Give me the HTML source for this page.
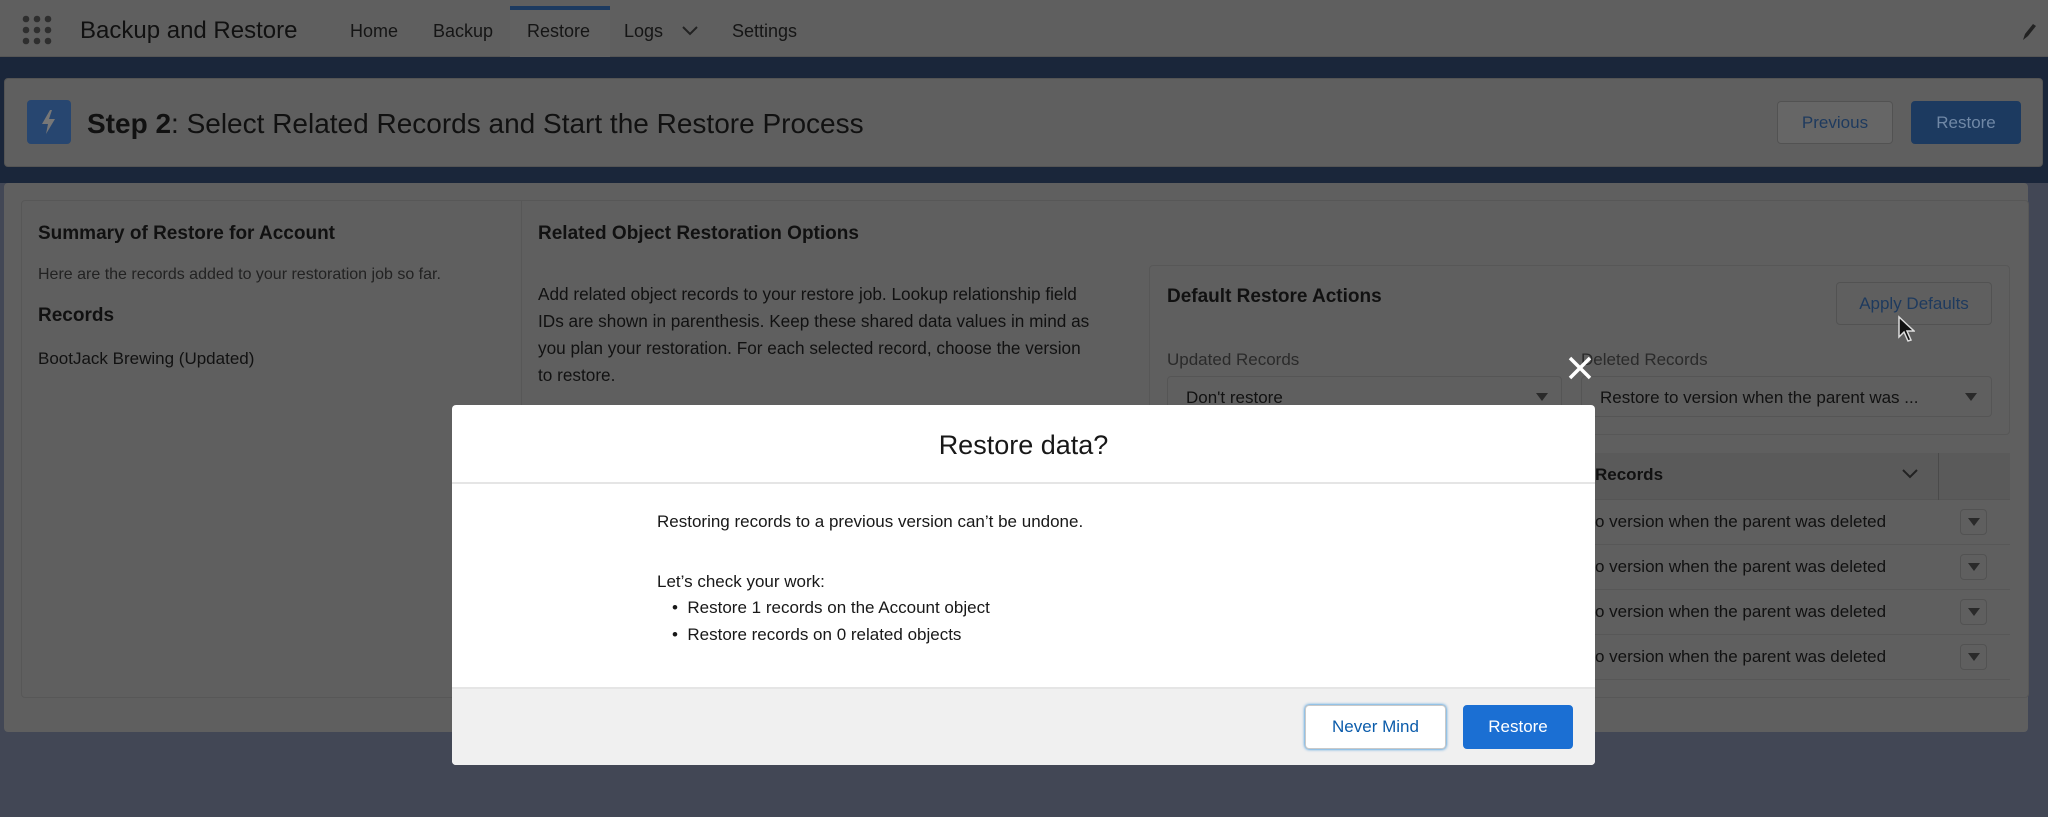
<!DOCTYPE html>
<html><head><meta charset="utf-8"><style>
*{box-sizing:border-box;margin:0;padding:0}
body{width:2048px;height:817px;overflow:hidden;position:relative;background:#424755;font-family:"Liberation Sans",sans-serif;color:#111}
.a{position:absolute}
.hdr{left:0;top:0;width:2048px;height:57px;background:#5f5f5f;border-bottom:1px solid #555}
.nav{top:21px;font-size:18px;color:#151515}
.band{left:0;top:57px;width:2048px;height:126px;background:#1a263a}
.card{background:#5f5f5f;border:1px solid #545454;border-radius:4px}
.btn{border:1px solid #525252;border-radius:4px;background:#666;color:#1e3a5e;font-size:17px;display:flex;align-items:center;justify-content:center}
.bb{background:#1c3a60;color:#7088a6;border-color:#1c3a60}
.lbl{font-size:17px;color:#2a2a2a}
.dd{background:#666;border:1px solid #555;border-radius:4px;font-size:17px;padding:11px 18px;color:#111}
.row{font-size:17px;color:#111}
.tri{width:0;height:0;border-left:6px solid transparent;border-right:6px solid transparent;border-top:8px solid #2a2a2a}
.mb{border:1px solid #c9c9c9;border-radius:4px;background:#fff;color:#0b5cab;font-size:17px;display:flex;align-items:center;justify-content:center}
</style></head><body>
<div class="a hdr"></div>
<svg class="a" style="left:22px;top:15px" width="30" height="30"><g fill="#2e2e2e"><circle cx="4" cy="4" r="3.3"/><circle cx="15" cy="4" r="3.3"/><circle cx="26" cy="4" r="3.3"/><circle cx="4" cy="15" r="3.3"/><circle cx="15" cy="15" r="3.3"/><circle cx="26" cy="15" r="3.3"/><circle cx="4" cy="26" r="3.3"/><circle cx="15" cy="26" r="3.3"/><circle cx="26" cy="26" r="3.3"/></g></svg>
<div class="a" style="left:80px;top:17px;font-size:24px;color:#111">Backup and Restore</div>
<div class="a" style="left:510px;top:6px;width:100px;height:51px;background:#616161;border-top:4px solid #1c3a60"></div>
<div class="a nav" style="left:350px">Home</div>
<div class="a nav" style="left:433px">Backup</div>
<div class="a nav" style="left:527px">Restore</div>
<div class="a nav" style="left:624px">Logs</div>
<svg class="a" style="left:682px;top:26px" width="16" height="10"><path d="M1 1l7 7 7-7" stroke="#222" stroke-width="2" fill="none"/></svg>
<div class="a nav" style="left:732px">Settings</div>
<svg class="a" style="left:2020px;top:22px" width="16" height="20"><path d="M3 18l2-6 8-10 3 2-8 10z" fill="#222"/></svg>
<div class="a band"></div>
<div class="a card" style="left:4px;top:78px;width:2039px;height:89px"></div>
<div class="a" style="left:27px;top:100px;width:44px;height:44px;background:#274670;border-radius:4px"></div>
<svg class="a" style="left:37px;top:108px" width="24" height="28"><path d="M13 2L5 16h6l-2 10 9-15h-6l3-9z" fill="#777"/></svg>
<div class="a" style="left:87px;top:108px;font-size:28px;color:#111"><b>Step 2</b>: Select Related Records and Start the Restore Process</div>
<div class="a btn" style="left:1777px;top:101px;width:116px;height:43px">Previous</div>
<div class="a btn bb" style="left:1911px;top:101px;width:110px;height:43px">Restore</div>
<div class="a" style="left:4px;top:183px;width:2024px;height:549px;background:#5f5f5f;border-radius:4px"></div>
<div class="a" style="left:21px;top:200px;width:2008px;height:498px;border:1px solid #575757;border-radius:4px;background:#5f5f5f"></div>
<div class="a" style="left:521px;top:200px;width:1px;height:498px;background:#575757"></div>
<div class="a" style="left:38px;top:223px;font-size:19px;font-weight:bold">Summary of Restore for Account</div>
<div class="a" style="left:38px;top:266px;font-size:16px;color:#222">Here are the records added to your restoration job so far.</div>
<div class="a" style="left:38px;top:305px;font-size:19px;font-weight:bold">Records</div>
<div class="a" style="left:38px;top:349px;font-size:17px">BootJack Brewing (Updated)</div>
<div class="a" style="left:538px;top:223px;font-size:19px;font-weight:bold">Related Object Restoration Options</div>
<div class="a" style="left:538px;top:281px;width:560px;font-size:17.2px;line-height:27px">Add related object records to your restore job. Lookup relationship field IDs are shown in parenthesis. Keep these shared data values in mind as you plan your restoration. For each selected record, choose the version to restore.</div>
<div class="a" style="left:1149px;top:265px;width:861px;height:170px;border:1px solid #575757;border-radius:4px;background:#5f5f5f"></div>
<div class="a" style="left:1167px;top:286px;font-size:19px;font-weight:bold">Default Restore Actions</div>
<div class="a btn" style="left:1836px;top:282px;width:156px;height:43px;background:#5f5f5f">Apply Defaults</div>
<div class="a lbl" style="left:1167px;top:350px">Updated Records</div>
<div class="a lbl" style="left:1581px;top:350px">Deleted Records</div>
<div class="a dd" style="left:1167px;top:376px;width:395px;height:41px;background:#5f5f5f">Don't restore</div>
<div class="a dd" style="left:1581px;top:376px;width:411px;height:41px;background:#5f5f5f">Restore to version when the parent was ...</div>
<div class="a tri" style="left:1536px;top:393px"></div>
<div class="a tri" style="left:1965px;top:393px"></div>
<div class="a" style="left:1149px;top:453px;width:861px;height:47px;background:#5a5a5a;border-bottom:1px solid #555"></div>
<div class="a" style="left:1595px;top:465px;font-size:17px;font-weight:bold">Records</div>
<svg class="a" style="left:1902px;top:469px" width="16" height="10"><path d="M1 1l7 7 7-7" stroke="#222" stroke-width="2" fill="none"/></svg>
<div class="a" style="left:1938px;top:453px;width:1px;height:47px;background:#4a4a4a"></div>
<div class="a" style="left:1149px;top:500px;width:861px;height:180px;background:#5f5f5f"></div>
<div class="a row" style="left:1595px;top:512px">o version when the parent was deleted</div>
<div class="a row" style="left:1595px;top:557px">o version when the parent was deleted</div>
<div class="a row" style="left:1595px;top:602px">o version when the parent was deleted</div>
<div class="a row" style="left:1595px;top:647px">o version when the parent was deleted</div>
<div class="a" style="left:1149px;top:544px;width:861px;height:1px;background:#575757"></div>
<div class="a" style="left:1149px;top:589px;width:861px;height:1px;background:#575757"></div>
<div class="a" style="left:1149px;top:634px;width:861px;height:1px;background:#575757"></div>
<div class="a" style="left:1149px;top:679px;width:861px;height:1px;background:#575757"></div>
<div class="a btn" style="left:1960px;top:509px;width:27px;height:26px;background:#5f5f5f"><div class="tri"></div></div>
<div class="a btn" style="left:1960px;top:554px;width:27px;height:26px;background:#5f5f5f"><div class="tri"></div></div>
<div class="a btn" style="left:1960px;top:599px;width:27px;height:26px;background:#5f5f5f"><div class="tri"></div></div>
<div class="a btn" style="left:1960px;top:644px;width:27px;height:26px;background:#5f5f5f"><div class="tri"></div></div>
<svg class="a" style="left:1567px;top:355px" width="26" height="26"><path d="M3 3l20 20M23 3L3 23" stroke="#fff" stroke-width="3.5"/></svg>
<div class="a" style="left:452px;top:405px;width:1143px;height:360px;background:#fff;border-radius:4px;overflow:hidden;color:#181818">
<div class="a" style="left:0;top:0;width:1143px;height:79px;border-bottom:2px solid #e5e5e5;text-align:center;font-size:27px;padding-top:25px">Restore data?</div>
<div class="a" style="left:205px;top:107px;font-size:17px">Restoring records to a previous version can’t be undone.</div>
<div class="a" style="left:205px;top:167px;font-size:17px">Let’s check your work:</div>
<div class="a" style="left:220px;top:193px;font-size:17px">•&nbsp;&nbsp;Restore 1 records on the Account object</div>
<div class="a" style="left:220px;top:220px;font-size:17px">•&nbsp;&nbsp;Restore records on 0 related objects</div>
<div class="a" style="left:0;top:282px;width:1143px;height:78px;background:#f0f0f0;border-top:2px solid #e5e5e5"></div>
<div class="a mb" style="left:853px;top:300px;width:141px;height:44px;box-shadow:0 0 3px #0176d3">Never Mind</div>
<div class="a mb" style="left:1011px;top:300px;width:110px;height:44px;background:#1b6fd3;color:#fff;border-color:#1b6fd3">Restore</div>
</div>
<svg class="a" style="left:1897px;top:315px" width="18" height="28"><path d="M2 2v20l5-5 4 9 3-1-4-9h7z" fill="#111" stroke="#ddd" stroke-width="1.5"/></svg>
</body></html>
